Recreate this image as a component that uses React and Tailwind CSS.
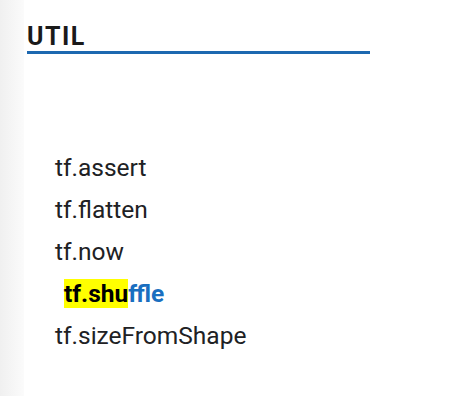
export default function App() {
  const items = ["tf.assert", "tf.flatten", "tf.now"];
  return (
    <div className="w-[474px] h-[402px] bg-white flex overflow-hidden" style={{ fontFamily: "Roboto, 'Liberation Sans', sans-serif" }}>
      <div className="w-[24px] h-[396px] shrink-0 bg-gradient-to-r from-[#f0f0f0] to-[#fbfbfb]" />
      <div className="pl-[3px] pt-[23px] flex flex-col">
        <div className="w-[343px] border-b-[3px] border-[#1d68b0] text-[25px] leading-[28px] font-bold tracking-[1.5px] text-[#1a1a1a]">
          UTIL
        </div>
        <div className="pt-[93px] pl-[28px] flex flex-col text-[24.5px] leading-[42px] text-[#202124]">
          {items.map((t) => (
            <div key={t}>{t}</div>
          ))}
          <div className="pl-[9px] font-bold">
            <span className="bg-[#ffff00] text-black">tf.shu</span>
            <span className="text-[#1a6fc0]">ffle</span>
          </div>
          <div>tf.sizeFromShape</div>
        </div>
      </div>
    </div>
  );
}
